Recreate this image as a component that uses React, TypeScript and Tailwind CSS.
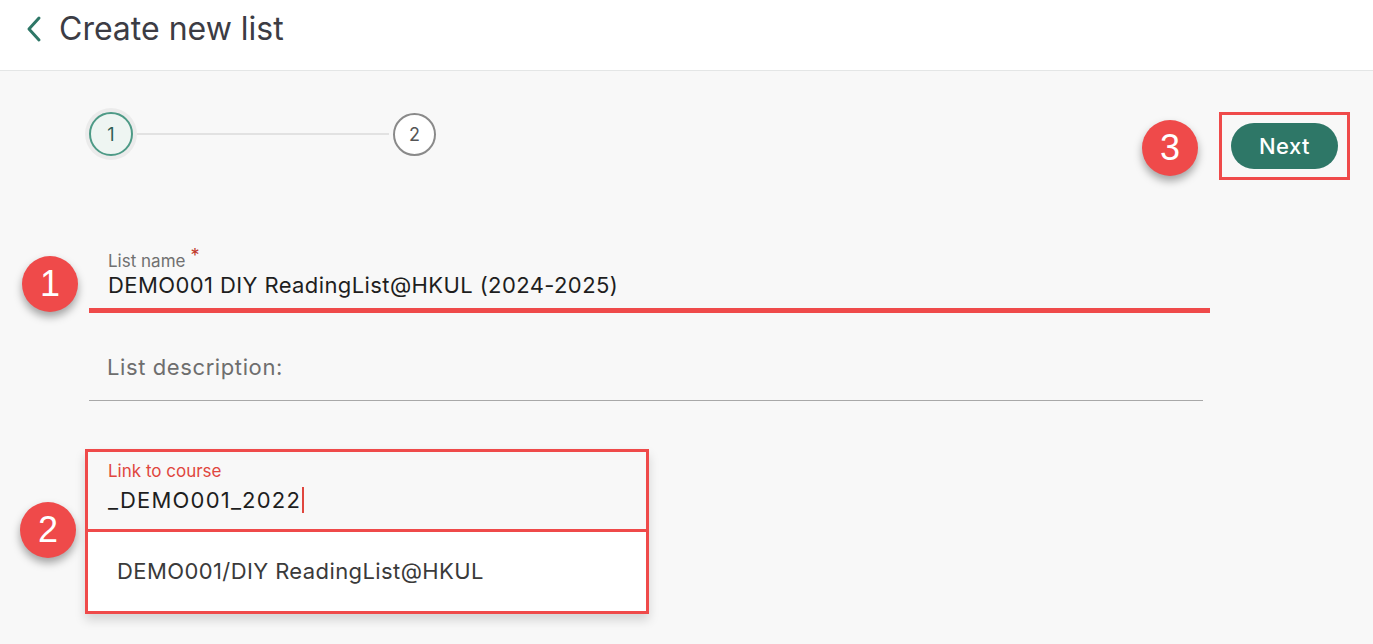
import React from "react";

function Badge({ n }: { n: string }) {
  return (
    <div className="w-[56px] h-[56px] rounded-full bg-[#ef4a4a] text-white flex items-center justify-center text-[36px] leading-none shadow-[0_5px_8px_rgba(0,0,0,0.35)] font-['Liberation_Sans',sans-serif]">
      {n}
    </div>
  );
}

export default function App() {
  return (
    <div className="w-[1373px] h-[644px] bg-[#f8f8f8] overflow-hidden font-['Inter',sans-serif] relative">
      {/* Header */}
      <div className="h-[71px] bg-white border-b border-[#e4e6e6] flex items-center pl-[24px]">
        <svg width="20" height="28" viewBox="0 0 20 28" className="mr-[15px] -mt-[12px]">
          <path d="M15 3 L5 14 L15 25" fill="none" stroke="#2e7767" strokeWidth="3" strokeLinecap="round" strokeLinejoin="round" />
        </svg>
        <div className="text-[32px] text-[#3c3c44] -mt-[12px]">Create new list</div>
      </div>

      {/* Stepper + Next */}
      <div className="flex items-start">
        <div className="flex items-center pl-[89px] pt-[41px]">
          <div className="w-[44px] h-[44px] rounded-full border-2 border-[#4d9a86] bg-[#eef5f2] text-[#2f5f55] flex items-center justify-center text-[18px] shadow-[0_0_0_4px_rgba(0,0,0,0.05)]">1</div>
          <div className="w-[252px] h-[2px] bg-[#e2e2e2] mx-[4px]"></div>
          <div className="w-[43px] h-[43px] rounded-full border-2 border-[#8a8a8a] bg-white text-[#555] flex items-center justify-center text-[18px]">2</div>
        </div>
        <div className="ml-auto flex items-center pt-[41px] pr-[23px] gap-[21px]">
          <div className="mt-[3px]">
            <Badge n="3" />
          </div>
          <div className="border-[3px] border-[#ef4a4a] px-[9px] py-[8px]">
            <div className="w-[107px] h-[46px] rounded-full bg-[#2e7767] text-white text-[22px] tracking-[0.5px] font-medium flex items-center justify-center">Next</div>
          </div>
        </div>
      </div>

      {/* List name */}
      <div className="flex items-start mt-[71px]">
        <div className="w-[89px] pl-[11px] flex justify-center pt-[5px]">
          <Badge n="1" />
        </div>
        <div className="w-[1121px]">
          <div className="pl-[19px] text-[17px] text-[#707070] leading-[20px]">
            List name<span className="text-[#c0392b] text-[18px] relative -top-[5px] ml-[5px]">*</span>
          </div>
          <div className="pl-[19px] text-[22px] tracking-[0.4px] text-[#1e1e1e] leading-[28px]">DEMO001 DIY ReadingList@HKUL (2024-2025)</div>
          <div className="h-[5px] bg-[#ef4a4a] mt-[9px]"></div>
        </div>
      </div>

      {/* List description */}
      <div className="ml-[89px] w-[1114px] mt-[40px]">
        <div className="pl-[18px] text-[22px] tracking-[0.6px] text-[#6e6e6e] leading-[28px]">List description:</div>
        <div className="h-[1px] bg-[#a8a8a8] mt-[19px]"></div>
      </div>

      {/* Link to course */}
      <div className="flex items-start mt-[48px]">
        <div className="w-[85px] pl-[11px] flex justify-center pt-[53px]">
          <Badge n="2" />
        </div>
        <div className="w-[564px] border-[3px] border-[#ef4a4a] bg-white shadow-[0_6px_10px_rgba(0,0,0,0.15)]">
          <div className="bg-[#f8f8f8] h-[80px] pl-[20px] pt-[9px] border-b-[3px] border-[#ef4a4a]">
            <div className="text-[17px] text-[#e0463e] leading-[20px]">Link to course</div>
            <div className="text-[22px] tracking-[1.2px] text-[#1e1e1e] leading-[28px] mt-[5px] flex items-center">
              _DEMO001_2022<span className="inline-block w-[2px] h-[26px] bg-[#e0463e] ml-[1px]"></span>
            </div>
          </div>
          <div className="h-[79px] flex items-center pl-[29px] text-[22px] tracking-[0.4px] text-[#3a3a3a]">DEMO001/DIY ReadingList@HKUL</div>
        </div>
      </div>
    </div>
  );
}
